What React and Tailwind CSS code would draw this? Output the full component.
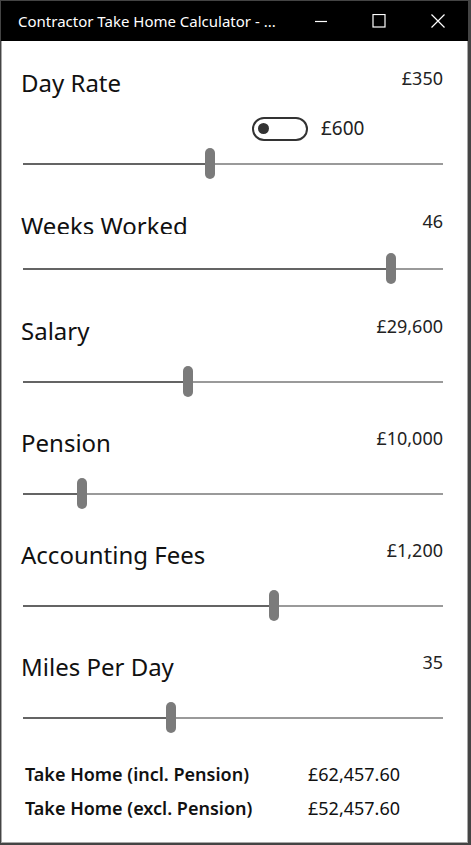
import React from 'react';

// Slider: darker filled part up to the thumb, lighter remainder
const Slider = ({ pct }) => (
  <div className="relative h-[32px]">
    <div className="flex h-full items-center">
      <div className="h-[2px] bg-[#646464]" style={{ width: `${pct}%` }} />
      <div className="h-[2px] flex-1 bg-[#9a9a9a]" />
    </div>
    <div
      className="absolute top-0 h-[31px] w-[10px] rounded-full bg-[#7b7b7b]"
      style={{ left: `calc(${pct}% - 5px)` }}
    />
  </div>
);

const Header = ({ label, value, height = 'h-[49px]', clip = false }) => (
  <div className={`flex items-start justify-between ${height}`}>
    {clip ? (
      <div className="mt-[2px] -ml-[2px] h-[20px] overflow-hidden text-[24px] leading-none text-[#111]">{label}</div>
    ) : (
      <div className="mt-[2px] -ml-[2px] text-[24px] leading-none text-[#111]">{label}</div>
    )}
    <div className="text-[18px] leading-none text-[#222]">{value}</div>
  </div>
);

const sections = [
  { label: 'Salary', value: '£29,600', pct: 39.3 },
  { label: 'Pension', value: '£10,000', pct: 14.0 },
  { label: 'Accounting Fees', value: '£1,200', pct: 59.8 },
  { label: 'Miles Per Day', value: '35', pct: 35.2 },
];

export default function App() {
  return (
    <div className="w-[471px] h-[845px] bg-[#444] pl-[1px] pt-[1px] pr-[3px] pb-[2px] font-['Noto_Sans',sans-serif]">
      <div className="flex h-full flex-col">
        {/* title bar */}
        <div className="flex h-[40px] shrink-0 items-center bg-black text-white">
          <span className="ml-[17px] text-[15px] leading-none">Contractor Take Home Calculator - ...</span>
          <div className="ml-auto flex h-full items-center">
            <div className="flex h-full w-[58px] items-center justify-center">
              <svg width="14" height="14" viewBox="0 0 14 14"><path d="M1 7.5h12" stroke="#fff" strokeWidth="1.2" /></svg>
            </div>
            <div className="flex h-full w-[58px] items-center justify-center">
              <svg width="14" height="14" viewBox="0 0 14 14"><rect x="1" y="0.5" width="12" height="12.5" fill="none" stroke="#fff" strokeWidth="1.2" /></svg>
            </div>
            <div className="flex h-full w-[60px] items-center justify-center">
              <svg width="16" height="16" viewBox="0 0 16 16"><path d="M1.5 1.5l13 13M14.5 1.5l-13 13" stroke="#fff" strokeWidth="1.2" /></svg>
            </div>
          </div>
        </div>

        {/* content */}
        <div className="flex-1 border-r border-b border-l border-[#a8a8a8] bg-white pt-[28px] pl-[21px] pr-[24px]">
          {/* Day Rate with toggle */}
          <div className="mb-[32px]">
            <Header label="Day Rate" value="£350" height="h-[48px]" />
            <div className="flex h-[23px] items-center gap-[13px] pl-[229px]">
              <div className="flex h-[24px] w-[56px] items-center rounded-full border-2 border-[#333] pl-[4px]">
                <div className="h-[11px] w-[11px] rounded-full bg-[#333]" />
              </div>
              <span className="text-[19px] leading-none text-[#222]">£600</span>
            </div>
            <div className="mt-[8px]">
              <Slider pct={44.5} />
            </div>
          </div>

          {/* Weeks Worked, label clipped like in the app */}
          <div className="mb-[32px]">
            <Header label="Weeks Worked" value="46" height="h-[41px]" clip />
            <Slider pct={87.6} />
          </div>

          {sections.map((s) => (
            <div key={s.label} className="mb-[31px]">
              <Header label={s.label} value={s.value} />
              <Slider pct={s.pct} />
            </div>
          ))}

          {/* results */}
          <div className="mt-[2px] flex flex-col gap-[16px] pl-[2px] text-[18px] leading-none text-[#111]">
            <div className="flex">
              <span className="w-[283px] font-semibold">Take Home (incl. Pension)</span>
              <span>£62,457.60</span>
            </div>
            <div className="flex">
              <span className="w-[283px] font-semibold">Take Home (excl. Pension)</span>
              <span>£52,457.60</span>
            </div>
          </div>
        </div>
      </div>
    </div>
  );
}
